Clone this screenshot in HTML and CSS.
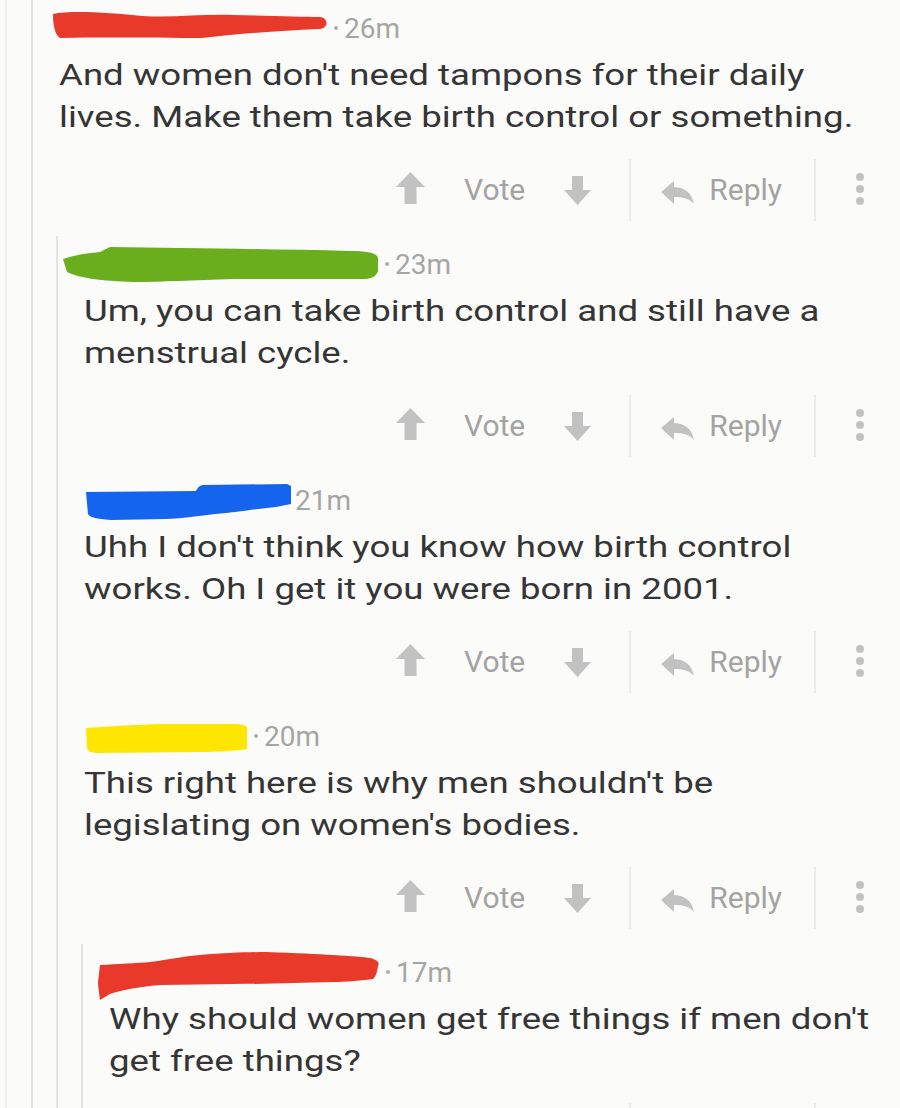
FILE: index.html
```html
<!DOCTYPE html>
<html>
<head>
  <title>Comments</title>
  <link rel="stylesheet" href="styles.css">
</head>
<body>
  <svg class="defs" width="0" height="0">
    <symbol id="up" viewBox="0 0 29 32"><path d="M14.5 0 L29 15 L20.5 15 L20.5 32 L8.5 32 L8.5 15 L0 15 Z"/></symbol>
    <symbol id="down" viewBox="0 0 27 29"><path d="M8 0 H19 V14 H27 L13.5 29 L0 14 H8 Z"/></symbol>
    <symbol id="reply" viewBox="0 0 33 23"><path d="M0 11 L13 0 L13 6 C24 6.5 31 12 33 23 C28 17.5 22 16 13 16 L13 23 Z"/></symbol>
    <symbol id="more" viewBox="0 0 10 34"><circle cx="5" cy="5" r="4"/><circle cx="5" cy="17" r="4"/><circle cx="5" cy="29" r="4"/></symbol>
  </svg>

  <div class="outer">
    <div class="thread">

      <div class="comment">
        <div class="head">
          <svg class="redact r1" width="276" height="56" viewBox="0 0 276 56"><path fill="#e8392b" d="M1 14 C20 10 60 13 90 16 C120 18 150 14 180 15 C220 16 250 17 268 17 C277 18 277 29 266 29 C230 31 190 33 150 38 C110 38 60 37 8 38 C2 34 1 22 1 14 Z"/></svg>
          <span class="time">26m</span>
        </div>
        <p class="body">And women don't need tampons for their daily lives. Make them take birth control or something.</p>
        <div class="actions">
          <svg class="ico up"><use href="#up"/></svg><span class="label vote">Vote</span><svg class="ico down"><use href="#down"/></svg>
          <span class="sep"></span>
          <svg class="ico reply"><use href="#reply"/></svg><span class="label">Reply</span>
          <span class="sep"></span>
          <svg class="ico more"><use href="#more"/></svg>
        </div>
      </div>

      <div class="thread">
        <div class="comment">
          <div class="head">
            <svg class="redact r2" width="316" height="56" viewBox="0 0 316 56"><path fill="#6aae1e" d="M0 23 C12 19 25 17 37 16 L47 11 C120 12 200 13 287 15 C305 15 314 17 315 22 L315 35 C313 41 308 43 300 43 C240 43 200 43 170 43 C130 44 100 46 70 46 C40 45 15 42 4 36 Z"/></svg>
            <span class="time">23m</span>
          </div>
          <p class="body">Um, you can take birth control and still have a menstrual cycle.</p>
          <div class="actions">
            <svg class="ico up"><use href="#up"/></svg><span class="label vote">Vote</span><svg class="ico down"><use href="#down"/></svg>
            <span class="sep"></span>
            <svg class="ico reply"><use href="#reply"/></svg><span class="label">Reply</span>
            <span class="sep"></span>
            <svg class="ico more"><use href="#more"/></svg>
          </div>
        </div>

        <div class="comment">
          <div class="head">
            <svg class="redact r3" width="206" height="56" viewBox="0 0 206 56"><path fill="#1464ee" d="M0 20 L110 19 C112 15 114 13 118 13 L201 12 L205 14 L205 32 L190 35 C170 37 150 40 140 41 C110 44 90 47 80 47 L25 48 C10 47 3 45 2 42 Z"/></svg>
            <span class="time nodot">21m</span>
          </div>
          <p class="body">Uhh I don't think you know how birth control works. Oh I get it you were born in 2001.</p>
          <div class="actions">
            <svg class="ico up"><use href="#up"/></svg><span class="label vote">Vote</span><svg class="ico down"><use href="#down"/></svg>
            <span class="sep"></span>
            <svg class="ico reply"><use href="#reply"/></svg><span class="label">Reply</span>
            <span class="sep"></span>
            <svg class="ico more"><use href="#more"/></svg>
          </div>
        </div>

        <div class="comment">
          <div class="head">
            <svg class="redact r4" width="162" height="56" viewBox="0 0 162 56"><path fill="#ffe600" d="M0 20 C30 18 60 16 87 16 L147 16 C155 16 159 17 161 19 L161 41 C150 43 130 44 114 44 L14 45 C5 45 1 43 1 40 Z"/></svg>
            <span class="time">20m</span>
          </div>
          <p class="body">This right here is why men shouldn't be legislating on women's bodies.</p>
          <div class="actions">
            <svg class="ico up"><use href="#up"/></svg><span class="label vote">Vote</span><svg class="ico down"><use href="#down"/></svg>
            <span class="sep"></span>
            <svg class="ico reply"><use href="#reply"/></svg><span class="label">Reply</span>
            <span class="sep"></span>
            <svg class="ico more"><use href="#more"/></svg>
          </div>
        </div>

        <div class="thread">
          <div class="comment">
            <div class="head">
              <svg class="redact r5" width="283" height="56" viewBox="0 0 283 56"><path fill="#e8392b" d="M3 21 C20 20 40 19 53 18 C75 15 90 12 103 11 C130 9 150 8 170 8 C200 9 220 10 236 11 C255 12 268 13 273 14 C281 16 283 19 281 22 C280 28 279 33 276 35 C260 37 250 38 236 38 C200 39 170 40 136 40 L63 41 C40 43 25 46 13 50 L3 56 C2 48 1 42 1 38 Z"/></svg>
              <span class="time">17m</span>
            </div>
            <p class="body">Why should women get free things if men don't get free things?</p>
            <div class="actions">
              <svg class="ico up"><use href="#up"/></svg><span class="label vote">Vote</span><svg class="ico down"><use href="#down"/></svg>
              <span class="sep"></span>
              <svg class="ico reply"><use href="#reply"/></svg><span class="label">Reply</span>
              <span class="sep"></span>
              <svg class="ico more"><use href="#more"/></svg>
            </div>
          </div>
        </div>
      </div>

    </div>
  </div>
</body>
</html>
```

FILE: styles.css
```css
/* comment thread */
body {
  margin: 0;
  background-color: #fbfbf9;
  font-family: Roboto, "Liberation Sans", sans-serif;
  color: #353535;
  overflow: hidden;
}

.defs {
  position: absolute;
  width: 0;
  height: 0;
}

.outer {
  margin-left: 5px;
  padding-left: 24px;
  border-left: 2px solid #f0f0ee;
}

.thread {
  border-left: 2px solid #e3e3e1;
  padding-left: 26px;
}

.thread .thread {
  margin-left: -3px;
}

.comment {
  padding-top: 12px;
}

.head {
  display: flex;
  align-items: center;
  height: 32px;
}

.redact {
  flex-shrink: 0;
}

.r1 { margin-left: -7px; }
.r2 { margin-left: -21px; }
.r3 { margin-left: 2px; }
.r4 { margin-left: 2px; }
.r5 { margin-left: -12px; }

.time {
  display: flex;
  align-items: center;
  margin-left: 6px;
  font-size: 28px;
  color: #a5a5a5;
}

.time::before {
  content: "";
  width: 4px;
  height: 4px;
  border-radius: 50%;
  background-color: #b0b0b0;
  margin-right: 6px;
}

.time.nodot {
  margin-left: 3px;
}

.time.nodot::before {
  display: none;
}

/* the screenshot is stretched sideways, so the text is too */
.body {
  margin: 10px 0 0;
  width: calc((100% - 22px) / 1.22);
  font-size: 30px;
  line-height: 42px;
  transform: scaleX(1.22);
  transform-origin: left top;
}

.actions {
  display: flex;
  justify-content: flex-end;
  align-items: center;
  height: 62px;
  margin-top: 21px;
  padding-bottom: 15px;
  padding-right: 35px;
}

.ico {
  fill: #c2c2c2;
  flex-shrink: 0;
}

.up {
  width: 29px;
  height: 32px;
  margin-top: -4px;
}

.down {
  width: 27px;
  height: 29px;
}

.reply {
  width: 33px;
  height: 23px;
  margin-left: 30px;
  margin-top: 4px;
}

.more {
  width: 10px;
  height: 34px;
  margin-left: 39px;
  margin-top: -3px;
}

.label {
  font-size: 30px;
  line-height: 1;
  color: #a3a3a3;
  margin-left: 15px;
}

.label.vote {
  margin: 0 39px;
}

.sep {
  width: 2px;
  align-self: stretch;
  background-color: #ededeb;
  margin-left: 38px;
}

.sep + .sep,
.label + .sep {
  margin-left: 32px;
}
```
